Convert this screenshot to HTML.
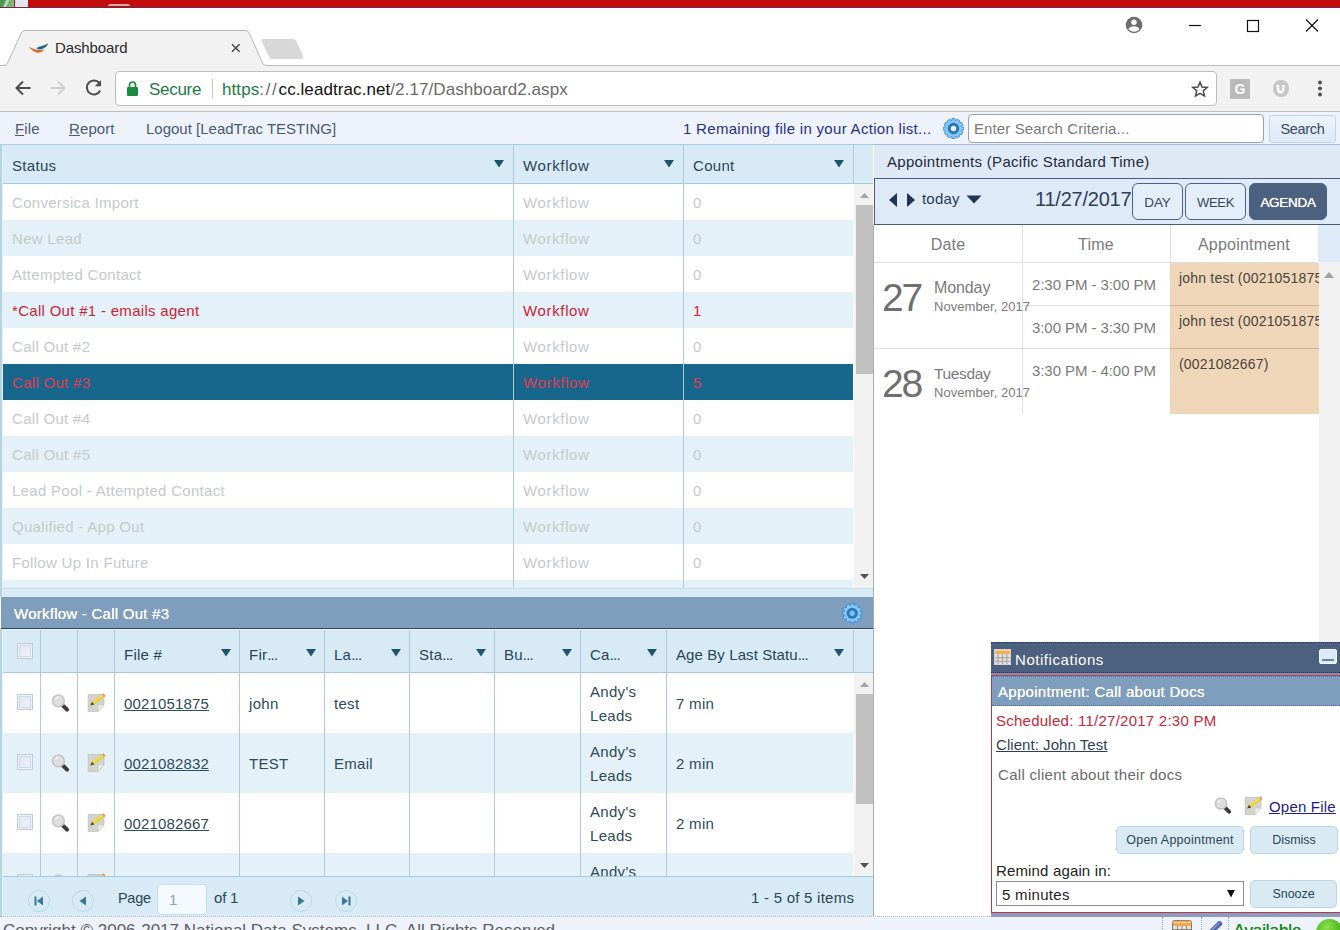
<!DOCTYPE html>
<html>
<head>
<meta charset="utf-8">
<title>Dashboard</title>
<style>
*{box-sizing:border-box;margin:0;padding:0}
html,body{width:1340px;height:930px;overflow:hidden;background:#fff}
body{position:relative;font-family:"Liberation Sans",sans-serif;font-size:15px;color:#2a4a5a;letter-spacing:.3px}
.a{position:absolute}
.t{position:absolute;white-space:nowrap;line-height:20px;height:20px;margin-top:1px}
svg{position:absolute;overflow:visible}
/* ---------- browser chrome ---------- */
#redbar{left:0;top:0;width:1340px;height:7px;background:#c20b0b}
#redline{left:0;top:7px;width:1340px;height:1px;background:#6a2a4a}
#toolbar{left:0;top:65px;width:1340px;height:47px;background:#f2f2f2;border-top:1px solid #bcbcbc;border-bottom:1px solid #bebebe}
#urlbar{left:115px;top:71px;width:1102px;height:35px;background:#fff;border:1px solid #bdbdbd;border-radius:4px}
#menubar{left:0;top:112px;width:1340px;height:33px;background:#eef3fb}

#sg{left:0;top:144px;width:874px;height:453px}
.sgh{background:#d8eaf5}
#sg .r{left:3px;width:850px;background:#fff;color:#c6c9cb}
#sg .r.alt{background:#e4f1f8}
#sg .r.red{color:#cf2236}
#sg .r.sel{background:#17678c;color:#e23a52}
#paneborder{left:873px;top:225px;width:1px;height:691px;background:#a3aeb8}

#wg{left:0;top:597px;width:874px;height:320px}
#wg .r{left:3px;width:850px;background:#fff;color:#2d4b5a;overflow:hidden}
#wg .r.alt{background:#e4f1f8}
.cb{width:16px;height:16px;border:1px solid #bfc9dc;background:linear-gradient(135deg,#dfe6f3,#eef2fa);box-shadow:inset 0 0 0 1px #f1f4fb,inset 0 0 0 2px #cfd8e8;margin-top:1px}

#ap{left:874px;top:144px;width:466px;height:772px;background:#fff}
.btn{border:1px solid #4c6080;border-radius:6px;background:#e4eef9}
.bt{top:48px;text-align:center;font-size:13.500px;color:#34465f;letter-spacing:-.1px}
.ev{margin-top:0;left:9px;font-size:14px;color:#4a443c;letter-spacing:.2px}

#nt{left:991px;top:642px;width:349px;height:276px;z-index:5}
.nb{background:#d9eaf3;border:1px solid #b9d7e5;border-radius:5px}
.nbt{text-align:center;font-size:12.500px;color:#2a4656;letter-spacing:-.05px;margin-top:0}
#ft{left:0;top:916px;width:1340px;height:14px;background:#eef2fa;border-top:1px dotted #b5bcc8;overflow:hidden}
</style>
</head>
<body>
<!-- browser chrome -->
<div class="a" id="redbar"></div>
<div class="a" id="redline"></div>
<div class="a" id="toolbar"></div>
<div class="a" id="urlbar"></div>
<div class="a" id="menubar"></div>

<!-- taskbar leftovers on red strip -->
<div class="a" style="left:0;top:0;width:14px;height:7px;background:linear-gradient(115deg,#4c9a4f 30%,#cfe6cf 45%,#6fb06f 60%,#8cc48c)"></div>
<div class="a" style="left:15px;top:0;width:13px;height:7px;background:#dfe6ee"></div>
<div class="a" style="left:108px;top:4px;width:22px;height:2px;background:#dfa9a4;border-radius:2px 2px 0 0"></div>
<!-- tab strip -->
<svg style="left:0;top:28px" width="320" height="40" viewBox="0 28 320 40">
  <path d="M0 65.5 H4 Q6.5 65.5 7.6 63 L21.3 33 Q22.5 30.5 25 30.5 H245.5 Q248 30.5 249.2 33 L262.5 63 Q263.6 65.5 266.5 65.5 H272 V68 H0 Z" fill="#f2f2f2"/>
  <path d="M0 65.5 H4 Q6.5 65.5 7.6 63 L21.3 33 Q22.5 30.5 25 30.5 H245.5 Q248 30.5 249.2 33 L262.5 63 Q263.6 65.5 266.5 65.5 H272" fill="none" stroke="#b6b6b6" stroke-width="1"/>
  <path d="M263 39 H293 Q295.500 39 296.500 41.500 L303 56 Q304 59 301 59 H272 Q270 59 269 56.500 L262 42 Q260.500 39 263 39 Z" fill="#d8d8d8"/>
  <!-- favicon -->
  <path d="M28.500 46.500 C33 49 38 51 44.500 49.500 C42 52.500 38 53.500 35 52 C32 50.500 30.500 48.500 28.500 46.500 Z" fill="#d9692c"/>
  <path d="M36.500 48.300 C39 45.500 44 46.500 48 43.200 C47.500 46.500 44 48.800 40 49.400 C38.500 49.600 37.300 49.200 36.500 48.300 Z" fill="#1f6a80"/>
  <!-- tab close -->
  <path d="M232 44.200 L239.600 51.800 M239.600 44.200 L232 51.800" stroke="#4a4a4a" stroke-width="1.500" fill="none"/>
</svg>
<div class="t" style="left:55px;top:36.500px;font-size:15px;color:#2b2b2b;letter-spacing:-.1px">Dashboard</div>
<!-- window controls -->
<svg style="left:1120px;top:12px" width="210" height="26" viewBox="1120 12 210 26">
  <circle cx="1134" cy="25" r="8.300" fill="#6e6e6e"/>
  <circle cx="1134" cy="22.300" r="2.700" fill="#fff"/>
  <path d="M1128.500 29.300 C1129.500 27 1131.500 26.300 1134 26.300 C1136.500 26.300 1138.500 27 1139.500 29.300 C1138 31 1136 31.700 1134 31.700 C1132 31.700 1130 31 1128.500 29.300 Z" fill="#fff"/>
  <path d="M1189 25.500 H1201" stroke="#111" stroke-width="1.200"/>
  <rect x="1247.500" y="20.500" width="11" height="11" fill="none" stroke="#111" stroke-width="1.200"/>
  <path d="M1306 19.500 L1318 31.500 M1318 19.500 L1306 31.500" stroke="#111" stroke-width="1.200"/>
</svg>
<!-- nav buttons -->
<svg style="left:10px;top:76px" width="100" height="26" viewBox="10 76 100 26">
  <path d="M30.500 88 H17 M23 81.500 L16.500 88 L23 94.500" stroke="#4d4d4d" stroke-width="2" fill="none"/>
  <path d="M50.500 88 H64 M58 81.500 L64.500 88 L58 94.500" stroke="#cfcfcf" stroke-width="2" fill="none"/>
  <path d="M99.300 83 A7 7 0 1 0 100.200 90.500" stroke="#4d4d4d" stroke-width="2" fill="none"/>
  <path d="M101 80 V86.200 H94.800 Z" fill="#4d4d4d"/>
</svg>
<!-- url content -->
<svg style="left:125px;top:80px" width="16" height="18" viewBox="125 80 16 18">
  <rect x="127" y="87" width="11" height="9" rx="1.200" fill="#1a8a3c"/>
  <path d="M129.500 87.500 V85 A3 3 0 0 1 135.500 85 V87.500" stroke="#1a8a3c" stroke-width="1.700" fill="none"/>
</svg>
<div class="t" style="left:149px;top:78.500px;font-size:17px;color:#1f7a45;letter-spacing:-.3px">Secure</div>
<div class="a" style="left:212px;top:79px;width:1px;height:19px;background:#c8c8c8"></div>
<div class="t" style="left:222px;top:78.500px;font-size:17px;letter-spacing:.08px"><span style="color:#1f7a45">https</span><span style="color:#6a6a6a;letter-spacing:1.700px">://</span><span style="color:#111">cc.leadtrac.net</span><span style="color:#6a6a6a">/2.17/Dashboard2.aspx</span></div>
<svg style="left:1191px;top:80px" width="18" height="18" viewBox="0 0 24 24"><path d="M12 2.800 L14.700 9.300 L21.700 9.900 L16.400 14.500 L18 21.300 L12 17.700 L6 21.300 L7.600 14.500 L2.300 9.900 L9.300 9.300 Z" fill="none" stroke="#4d4d4d" stroke-width="2" stroke-linejoin="miter"/></svg>
<div class="a" style="left:1230px;top:78.500px;width:20px;height:20px;background:#bababa"></div>
<div class="t" style="left:1230px;top:79px;width:20px;text-align:center;font-size:14px;font-weight:bold;color:#fff;letter-spacing:0;margin-top:0">G</div>
<div class="a" style="left:1272.500px;top:80px;width:16.500px;height:16.500px;border-radius:50%;background:#c6c6c6"></div>
<svg style="left:1272px;top:80px" width="17" height="17" viewBox="0 0 17 17"><path d="M4 5 H7.300 V9.300 A1.400 1.400 0 0 0 10.100 9.300 V5 H13 V6.200 H12.300 V9.700 A3.700 3.700 0 0 1 4.900 9.700 V6.200 H4 Z" fill="#fafafa"/></svg>
<svg style="left:1317px;top:79px" width="6" height="20" viewBox="0 0 6 20"><circle cx="3" cy="3.500" r="1.900" fill="#4d4d4d"/><circle cx="3" cy="9.500" r="1.900" fill="#4d4d4d"/><circle cx="3" cy="15.500" r="1.900" fill="#4d4d4d"/></svg>
<!-- app menu bar -->
<div class="t" style="left:15px;top:118px;color:#4a5a72;letter-spacing:.1px"><u>F</u>ile</div>
<div class="t" style="left:69px;top:118px;color:#4a5a72;letter-spacing:.1px"><u>R</u>eport</div>
<div class="t" style="left:146px;top:118px;color:#4a5a72;letter-spacing:0">Logout [LeadTrac TESTING]</div>
<div class="t" style="left:683px;top:118px;color:#2a2f8c;letter-spacing:.3px">1 Remaining file in your Action list...</div>
<svg style="left:942.5px;top:117.5px" width="21" height="21" viewBox="-10.500 -10.500 21 21"><path d="M-1.62 -9.87A10.0 10.0 0 0 1 1.62 -9.87L1.60 -8.14A8.3 8.3 0 0 1 2.69 -7.85L3.53 -9.35A10.0 10.0 0 0 1 6.33 -7.74L5.46 -6.25A8.3 8.3 0 0 1 6.25 -5.46L7.74 -6.33A10.0 10.0 0 0 1 9.35 -3.53L7.85 -2.69A8.3 8.3 0 0 1 8.14 -1.60L9.87 -1.62A10.0 10.0 0 0 1 9.87 1.62L8.14 1.60A8.3 8.3 0 0 1 7.85 2.69L9.35 3.53A10.0 10.0 0 0 1 7.74 6.33L6.25 5.46A8.3 8.3 0 0 1 5.46 6.25L6.33 7.74A10.0 10.0 0 0 1 3.53 9.35L2.69 7.85A8.3 8.3 0 0 1 1.60 8.14L1.62 9.87A10.0 10.0 0 0 1 -1.62 9.87L-1.60 8.14A8.3 8.3 0 0 1 -2.69 7.85L-3.53 9.35A10.0 10.0 0 0 1 -6.33 7.74L-5.46 6.25A8.3 8.3 0 0 1 -6.25 5.46L-7.74 6.33A10.0 10.0 0 0 1 -9.35 3.53L-7.85 2.69A8.3 8.3 0 0 1 -8.14 1.60L-9.87 1.62A10.0 10.0 0 0 1 -9.87 -1.62L-8.14 -1.60A8.3 8.3 0 0 1 -7.85 -2.69L-9.35 -3.53A10.0 10.0 0 0 1 -7.74 -6.33L-6.25 -5.46A8.3 8.3 0 0 1 -5.46 -6.25L-6.33 -7.74A10.0 10.0 0 0 1 -3.53 -9.35L-2.69 -7.85A8.3 8.3 0 0 1 -1.60 -8.14L-1.62 -9.87Z" fill="#86c8f8" stroke="#3f8ad0" stroke-width=".9" stroke-linejoin="round"/><circle r="5.700" fill="#2b76be"/><circle r="2.700" fill="#eef6fd"/></svg>
<div class="a" style="left:968px;top:113.500px;width:296px;height:29.500px;background:#fff;border:1px solid #95a1b0;border-radius:4px"></div>
<div class="t" style="left:974px;top:118px;color:#7a7a7a;letter-spacing:.12px">Enter Search Criteria...</div>
<div class="a" style="left:1269px;top:115px;width:67px;height:28px;background:linear-gradient(#edf3fa,#dce8f5);border:1px solid #c3d3e6;border-radius:3px"></div>
<div class="t" style="left:1269px;top:118px;width:67px;text-align:center;color:#3a4a62;font-size:14.500px;letter-spacing:-.3px">Search</div>

<!-- status grid -->
<div class="a" id="sg">
<div class="a" style="left:0;top:0;width:874px;height:1px;background:#a9cfe0"></div>
<div class="a" style="left:0;top:1px;width:3px;height:452px;background:#e6f2f7;border-left:2px solid #b6d4df"></div>
<div class="a sgh" style="left:3px;top:1px;width:870px;height:38px"></div>
<div class="a" style="left:3px;top:39px;width:870px;height:1px;background:#a3cbdd"></div>
<div class="a r" style="top:40px;height:36px">
<span class="t" style="left:9px;top:8px">Conversica Import</span><span class="t" style="left:520px;top:8px;letter-spacing:.65px">Workflow</span><span class="t" style="left:690px;top:8px;letter-spacing:0">0</span>
</div>
<div class="a r alt" style="top:76px;height:36px">
<span class="t" style="left:9px;top:8px">New Lead</span><span class="t" style="left:520px;top:8px;letter-spacing:.65px">Workflow</span><span class="t" style="left:690px;top:8px;letter-spacing:0">0</span>
</div>
<div class="a r" style="top:112px;height:36px">
<span class="t" style="left:9px;top:8px">Attempted Contact</span><span class="t" style="left:520px;top:8px;letter-spacing:.65px">Workflow</span><span class="t" style="left:690px;top:8px;letter-spacing:0">0</span>
</div>
<div class="a r alt red" style="top:148px;height:36px">
<span class="t" style="left:9px;top:8px">*Call Out #1 - emails agent</span><span class="t" style="left:520px;top:8px;letter-spacing:.65px">Workflow</span><span class="t" style="left:690px;top:8px;letter-spacing:0">1</span>
</div>
<div class="a r" style="top:184px;height:36px">
<span class="t" style="left:9px;top:8px">Call Out #2</span><span class="t" style="left:520px;top:8px;letter-spacing:.65px">Workflow</span><span class="t" style="left:690px;top:8px;letter-spacing:0">0</span>
</div>
<div class="a r alt sel" style="top:220px;height:36px">
<span class="t" style="left:9px;top:8px">Call Out #3</span><span class="t" style="left:520px;top:8px;letter-spacing:.65px">Workflow</span><span class="t" style="left:690px;top:8px;letter-spacing:0">5</span>
</div>
<div class="a r" style="top:256px;height:36px">
<span class="t" style="left:9px;top:8px">Call Out #4</span><span class="t" style="left:520px;top:8px;letter-spacing:.65px">Workflow</span><span class="t" style="left:690px;top:8px;letter-spacing:0">0</span>
</div>
<div class="a r alt" style="top:292px;height:36px">
<span class="t" style="left:9px;top:8px">Call Out #5</span><span class="t" style="left:520px;top:8px;letter-spacing:.65px">Workflow</span><span class="t" style="left:690px;top:8px;letter-spacing:0">0</span>
</div>
<div class="a r" style="top:328px;height:36px">
<span class="t" style="left:9px;top:8px">Lead Pool - Attempted Contact</span><span class="t" style="left:520px;top:8px;letter-spacing:.65px">Workflow</span><span class="t" style="left:690px;top:8px;letter-spacing:0">0</span>
</div>
<div class="a r alt" style="top:364px;height:36px">
<span class="t" style="left:9px;top:8px">Qualified - App Out</span><span class="t" style="left:520px;top:8px;letter-spacing:.65px">Workflow</span><span class="t" style="left:690px;top:8px;letter-spacing:0">0</span>
</div>
<div class="a r" style="top:400px;height:36px">
<span class="t" style="left:9px;top:8px">Follow Up In Future</span><span class="t" style="left:520px;top:8px;letter-spacing:.65px">Workflow</span><span class="t" style="left:690px;top:8px;letter-spacing:0">0</span>
</div>
<div class="a r alt" style="top:436px;height:8px">
</div>
<div class="a" style="left:513px;top:1px;width:1px;height:443px;background:#aecbd8"></div>
<div class="a" style="left:683px;top:1px;width:1px;height:443px;background:#aecbd8"></div>
<div class="a" style="left:853px;top:1px;width:1px;height:38px;background:#aecbd8"></div>
<span class="t" style="left:12px;top:11px;color:#2a4656">Status</span>
<span class="t" style="left:523px;top:11px;color:#2a4656;letter-spacing:.65px">Workflow</span>
<span class="t" style="left:693px;top:11px;color:#2a4656">Count</span>
<svg style="left:494px;top:16px" width="10" height="8" viewBox="0 0 10 8"><path d="M0 0 H10 L5 7.500 Z" fill="#1d546e"/></svg>
<svg style="left:664px;top:16px" width="10" height="8" viewBox="0 0 10 8"><path d="M0 0 H10 L5 7.500 Z" fill="#1d546e"/></svg>
<svg style="left:834px;top:16px" width="10" height="8" viewBox="0 0 10 8"><path d="M0 0 H10 L5 7.500 Z" fill="#1d546e"/></svg>
<div class="a" style="left:854px;top:40px;width:19px;height:404px;background:#f1f1f1"></div>
<div class="a" style="left:856px;top:61px;width:17px;height:169px;background:#c1c1c1"></div>
<svg style="left:860px;top:49px" width="9" height="5" viewBox="0 0 9 5"><path d="M0 5 L4.500 0 L9 5 Z" fill="#a3a3a3"/></svg>
<svg style="left:860px;top:430px" width="9" height="5" viewBox="0 0 9 5"><path d="M0 0 L4.500 5 L9 0 Z" fill="#505050"/></svg>
<div class="a" style="left:3px;top:444px;width:870px;height:9px;background:#d9ebf5;border-top:1px solid #c3dfec"></div>
</div>
<div class="a" id="paneborder"></div>

<!-- workflow grid -->
<div class="a" id="wg">
<div class="a" style="left:1px;top:0;width:872px;height:31px;background:#7f9dbd"></div>
<div class="a" style="left:1px;top:31px;width:872px;height:1px;background:#2c4668"></div><div class="a" style="left:1px;top:32px;width:872px;height:1px;background:#e6f2f9"></div>
<span class="t" style="left:14px;top:6px;color:#fff;letter-spacing:.25px;text-shadow:0 0 .6px #fff">Workflow - Call Out #3</span>
<svg style="left:841.5px;top:5.7px" width="20.5" height="20.5" viewBox="-10.500 -10.500 21 21"><path d="M-1.62 -9.87A10.0 10.0 0 0 1 1.62 -9.87L1.60 -8.14A8.3 8.3 0 0 1 2.69 -7.85L3.53 -9.35A10.0 10.0 0 0 1 6.33 -7.74L5.46 -6.25A8.3 8.3 0 0 1 6.25 -5.46L7.74 -6.33A10.0 10.0 0 0 1 9.35 -3.53L7.85 -2.69A8.3 8.3 0 0 1 8.14 -1.60L9.87 -1.62A10.0 10.0 0 0 1 9.87 1.62L8.14 1.60A8.3 8.3 0 0 1 7.85 2.69L9.35 3.53A10.0 10.0 0 0 1 7.74 6.33L6.25 5.46A8.3 8.3 0 0 1 5.46 6.25L6.33 7.74A10.0 10.0 0 0 1 3.53 9.35L2.69 7.85A8.3 8.3 0 0 1 1.60 8.14L1.62 9.87A10.0 10.0 0 0 1 -1.62 9.87L-1.60 8.14A8.3 8.3 0 0 1 -2.69 7.85L-3.53 9.35A10.0 10.0 0 0 1 -6.33 7.74L-5.46 6.25A8.3 8.3 0 0 1 -6.25 5.46L-7.74 6.33A10.0 10.0 0 0 1 -9.35 3.53L-7.85 2.69A8.3 8.3 0 0 1 -8.14 1.60L-9.87 1.62A10.0 10.0 0 0 1 -9.87 -1.62L-8.14 -1.60A8.3 8.3 0 0 1 -7.85 -2.69L-9.35 -3.53A10.0 10.0 0 0 1 -7.74 -6.33L-6.25 -5.46A8.3 8.3 0 0 1 -5.46 -6.25L-6.33 -7.74A10.0 10.0 0 0 1 -3.53 -9.35L-2.69 -7.85A8.3 8.3 0 0 1 -1.60 -8.14L-1.62 -9.87Z" fill="#86c8f8" stroke="#3f8ad0" stroke-width=".9" stroke-linejoin="round"/><circle r="5.700" fill="#2b76be"/><circle r="2.700" fill="#7cc0f4"/></svg>
<div class="a" style="left:0;top:32px;width:3px;height:287px;background:#e6f2f7;border-left:2px solid #b6d4df"></div>
<div class="a" style="left:3px;top:33px;width:870px;height:42px;background:#d8eaf5"></div>
<div class="a" style="left:3px;top:75px;width:870px;height:1px;background:#a3cbdd"></div>
<div class="a r" style="top:76px;height:60px">
<span class="a cb" style="left:14px;top:20px"></span>
<svg style="left:47px;top:20px" width="21" height="21" viewBox="0 0 20 20"><path d="M12.300 12 L16.300 15.800" stroke="#3c3c3c" stroke-width="3.800" stroke-linecap="round"/><circle cx="8" cy="7.500" r="5.600" fill="#dedede" stroke="#c4c4c4" stroke-width="1.500"/><path d="M5 6.300 A3.500 3.500 0 0 1 8.300 4.200" stroke="#f2f2f2" stroke-width="1.600" fill="none"/></svg>
<svg style="left:84px;top:19px" width="20" height="20" viewBox="0 0 20 20"><path d="M1.200 2.500 H17 V13 L11 19.500 H1.200 Z" fill="#d3d3cf" stroke="#bdbdb8" stroke-width=".7"/><path d="M17 13 H11 V19.500 Z" fill="#efefeb" stroke="#c4c4bf" stroke-width=".5"/><path d="M3.200 13.500 L5 9.800 L15.200 2.200 L17.300 5 L7.300 12.500 Z" fill="#e6cf2e"/><path d="M6 10.500 L16 3.200" stroke="#f4e878" stroke-width="1"/><path d="M3.200 13.500 L5 9.800 L7.300 12.500 Z" fill="#4a4630"/><path d="M15.200 2.200 L17.300 5 L18.600 3.900 L16.600 1.200 Z" fill="#e58a78"/></svg>
<span class="t" style="left:121px;top:19.500px;text-decoration:underline;letter-spacing:.15px">0021051875</span>
<span class="t" style="left:246px;top:19.500px">john</span><span class="t" style="left:331px;top:19.500px">test</span>
<span class="t" style="left:673px;top:19.500px;letter-spacing:.3px">7 min</span>
<span class="t" style="left:587px;top:8px">Andy's</span>
<span class="t" style="left:587px;top:32px">Leads</span>
</div>
<div class="a r alt" style="top:136px;height:60px">
<span class="a cb" style="left:14px;top:20px"></span>
<svg style="left:47px;top:20px" width="21" height="21" viewBox="0 0 20 20"><path d="M12.300 12 L16.300 15.800" stroke="#3c3c3c" stroke-width="3.800" stroke-linecap="round"/><circle cx="8" cy="7.500" r="5.600" fill="#dedede" stroke="#c4c4c4" stroke-width="1.500"/><path d="M5 6.300 A3.500 3.500 0 0 1 8.300 4.200" stroke="#f2f2f2" stroke-width="1.600" fill="none"/></svg>
<svg style="left:84px;top:19px" width="20" height="20" viewBox="0 0 20 20"><path d="M1.200 2.500 H17 V13 L11 19.500 H1.200 Z" fill="#d3d3cf" stroke="#bdbdb8" stroke-width=".7"/><path d="M17 13 H11 V19.500 Z" fill="#efefeb" stroke="#c4c4bf" stroke-width=".5"/><path d="M3.200 13.500 L5 9.800 L15.200 2.200 L17.300 5 L7.300 12.500 Z" fill="#e6cf2e"/><path d="M6 10.500 L16 3.200" stroke="#f4e878" stroke-width="1"/><path d="M3.200 13.500 L5 9.800 L7.300 12.500 Z" fill="#4a4630"/><path d="M15.200 2.200 L17.300 5 L18.600 3.900 L16.600 1.200 Z" fill="#e58a78"/></svg>
<span class="t" style="left:121px;top:19.500px;text-decoration:underline;letter-spacing:.15px">0021082832</span>
<span class="t" style="left:246px;top:19.500px">TEST</span><span class="t" style="left:331px;top:19.500px">Email</span>
<span class="t" style="left:673px;top:19.500px;letter-spacing:.3px">2 min</span>
<span class="t" style="left:587px;top:8px">Andy's</span>
<span class="t" style="left:587px;top:32px">Leads</span>
</div>
<div class="a r" style="top:196px;height:60px">
<span class="a cb" style="left:14px;top:20px"></span>
<svg style="left:47px;top:20px" width="21" height="21" viewBox="0 0 20 20"><path d="M12.300 12 L16.300 15.800" stroke="#3c3c3c" stroke-width="3.800" stroke-linecap="round"/><circle cx="8" cy="7.500" r="5.600" fill="#dedede" stroke="#c4c4c4" stroke-width="1.500"/><path d="M5 6.300 A3.500 3.500 0 0 1 8.300 4.200" stroke="#f2f2f2" stroke-width="1.600" fill="none"/></svg>
<svg style="left:84px;top:19px" width="20" height="20" viewBox="0 0 20 20"><path d="M1.200 2.500 H17 V13 L11 19.500 H1.200 Z" fill="#d3d3cf" stroke="#bdbdb8" stroke-width=".7"/><path d="M17 13 H11 V19.500 Z" fill="#efefeb" stroke="#c4c4bf" stroke-width=".5"/><path d="M3.200 13.500 L5 9.800 L15.200 2.200 L17.300 5 L7.300 12.500 Z" fill="#e6cf2e"/><path d="M6 10.500 L16 3.200" stroke="#f4e878" stroke-width="1"/><path d="M3.200 13.500 L5 9.800 L7.300 12.500 Z" fill="#4a4630"/><path d="M15.200 2.200 L17.300 5 L18.600 3.900 L16.600 1.200 Z" fill="#e58a78"/></svg>
<span class="t" style="left:121px;top:19.500px;text-decoration:underline;letter-spacing:.15px">0021082667</span>
<span class="t" style="left:246px;top:19.500px"></span><span class="t" style="left:331px;top:19.500px"></span>
<span class="t" style="left:673px;top:19.500px;letter-spacing:.3px">2 min</span>
<span class="t" style="left:587px;top:8px">Andy's</span>
<span class="t" style="left:587px;top:32px">Leads</span>
</div>
<div class="a r alt" style="top:256px;height:23px">
<span class="a cb" style="left:14px;top:20px"></span>
<svg style="left:47px;top:20px" width="21" height="21" viewBox="0 0 20 20"><path d="M12.300 12 L16.300 15.800" stroke="#3c3c3c" stroke-width="3.800" stroke-linecap="round"/><circle cx="8" cy="7.500" r="5.600" fill="#dedede" stroke="#c4c4c4" stroke-width="1.500"/><path d="M5 6.300 A3.500 3.500 0 0 1 8.300 4.200" stroke="#f2f2f2" stroke-width="1.600" fill="none"/></svg>
<svg style="left:84px;top:19px" width="20" height="20" viewBox="0 0 20 20"><path d="M1.200 2.500 H17 V13 L11 19.500 H1.200 Z" fill="#d3d3cf" stroke="#bdbdb8" stroke-width=".7"/><path d="M17 13 H11 V19.500 Z" fill="#efefeb" stroke="#c4c4bf" stroke-width=".5"/><path d="M3.200 13.500 L5 9.800 L15.200 2.200 L17.300 5 L7.300 12.500 Z" fill="#e6cf2e"/><path d="M6 10.500 L16 3.200" stroke="#f4e878" stroke-width="1"/><path d="M3.200 13.500 L5 9.800 L7.300 12.500 Z" fill="#4a4630"/><path d="M15.200 2.200 L17.300 5 L18.600 3.900 L16.600 1.200 Z" fill="#e58a78"/></svg>
<span class="t" style="left:587px;top:8px">Andy's</span>
</div>
<div class="a" style="left:40px;top:33px;width:1px;height:286px;background:#aecbd8"></div>
<div class="a" style="left:77px;top:33px;width:1px;height:286px;background:#aecbd8"></div>
<div class="a" style="left:114px;top:33px;width:1px;height:286px;background:#aecbd8"></div>
<div class="a" style="left:239px;top:33px;width:1px;height:286px;background:#aecbd8"></div>
<div class="a" style="left:324px;top:33px;width:1px;height:286px;background:#aecbd8"></div>
<div class="a" style="left:409px;top:33px;width:1px;height:286px;background:#aecbd8"></div>
<div class="a" style="left:494px;top:33px;width:1px;height:286px;background:#aecbd8"></div>
<div class="a" style="left:580px;top:33px;width:1px;height:286px;background:#aecbd8"></div>
<div class="a" style="left:666px;top:33px;width:1px;height:286px;background:#aecbd8"></div>
<div class="a" style="left:853px;top:33px;width:1px;height:42px;background:#aecbd8"></div>
<span class="a cb" style="left:17px;top:45px"></span>
<span class="t" style="left:124px;top:46.500px;color:#2a4656;letter-spacing:.25px">File #</span>
<span class="t" style="left:249px;top:46.500px;color:#2a4656;letter-spacing:.25px">Fir<span style="letter-spacing:-.8px">...</span></span>
<span class="t" style="left:334px;top:46.500px;color:#2a4656;letter-spacing:.25px">La<span style="letter-spacing:-.8px">...</span></span>
<span class="t" style="left:419px;top:46.500px;color:#2a4656;letter-spacing:.25px">Sta<span style="letter-spacing:-.8px">...</span></span>
<span class="t" style="left:504px;top:46.500px;color:#2a4656;letter-spacing:.25px">Bu<span style="letter-spacing:-.8px">...</span></span>
<span class="t" style="left:590px;top:46.500px;color:#2a4656;letter-spacing:.25px">Ca<span style="letter-spacing:-.8px">...</span></span>
<span class="t" style="left:676px;top:46.500px;color:#2a4656;letter-spacing:.1px">Age By Last Statu<span style="letter-spacing:-.8px">...</span></span>
<svg style="left:221px;top:52px" width="10" height="8" viewBox="0 0 10 8"><path d="M0 0 H10 L5 7.500 Z" fill="#1d546e"/></svg>
<svg style="left:306px;top:52px" width="10" height="8" viewBox="0 0 10 8"><path d="M0 0 H10 L5 7.500 Z" fill="#1d546e"/></svg>
<svg style="left:391px;top:52px" width="10" height="8" viewBox="0 0 10 8"><path d="M0 0 H10 L5 7.500 Z" fill="#1d546e"/></svg>
<svg style="left:476px;top:52px" width="10" height="8" viewBox="0 0 10 8"><path d="M0 0 H10 L5 7.500 Z" fill="#1d546e"/></svg>
<svg style="left:562px;top:52px" width="10" height="8" viewBox="0 0 10 8"><path d="M0 0 H10 L5 7.500 Z" fill="#1d546e"/></svg>
<svg style="left:647px;top:52px" width="10" height="8" viewBox="0 0 10 8"><path d="M0 0 H10 L5 7.500 Z" fill="#1d546e"/></svg>
<svg style="left:834px;top:52px" width="10" height="8" viewBox="0 0 10 8"><path d="M0 0 H10 L5 7.500 Z" fill="#1d546e"/></svg>
<div class="a" style="left:854px;top:76px;width:19px;height:203px;background:#f1f1f1"></div>
<div class="a" style="left:856px;top:97px;width:17px;height:110px;background:#c1c1c1"></div>
<svg style="left:860px;top:85px" width="9" height="5" viewBox="0 0 9 5"><path d="M0 5 L4.500 0 L9 5 Z" fill="#a3a3a3"/></svg>
<svg style="left:860px;top:266px" width="9" height="5" viewBox="0 0 9 5"><path d="M0 0 L4.500 5 L9 0 Z" fill="#505050"/></svg>
<div class="a" style="left:3px;top:279px;width:870px;height:40px;background:#d8eaf5;border-top:1px solid #a3cbdd"></div>
<svg style="left:27px;top:292px" width="24" height="24" viewBox="-12 -12 24 24"><circle r="10.500" fill="#d8eaf5" stroke="#b9d9e8" stroke-width="1"/><path d="M-3.500 -4.500 V4.500" stroke="#3a7a90" stroke-width="2"/><path d="M4 -4.500 V4.500 L-2 0 Z" fill="#3a7a90"/></svg>
<svg style="left:71px;top:292px" width="24" height="24" viewBox="-12 -12 24 24"><circle r="10.500" fill="#d8eaf5" stroke="#b9d9e8" stroke-width="1"/><path d="M3 -4.500 V4.500 L-3.500 0 Z" fill="#3a7a90"/></svg>
<svg style="left:289px;top:292px" width="24" height="24" viewBox="-12 -12 24 24"><circle r="10.500" fill="#d8eaf5" stroke="#b9d9e8" stroke-width="1"/><path d="M-3 -4.500 V4.500 L3.500 0 Z" fill="#3a7a90"/></svg>
<svg style="left:334px;top:292px" width="24" height="24" viewBox="-12 -12 24 24"><circle r="10.500" fill="#d8eaf5" stroke="#b9d9e8" stroke-width="1"/><path d="M3.500 -4.500 V4.500" stroke="#3a7a90" stroke-width="2"/><path d="M-4 -4.500 V4.500 L2 0 Z" fill="#3a7a90"/></svg>
<span class="t" style="left:118px;top:290px;color:#2a4656;font-size:14.500px;letter-spacing:-.3px">Page</span>
<div class="a" style="left:157px;top:287px;width:50px;height:31px;background:#f3f9fc;border:1px solid #c3dfec;border-radius:4px"></div>
<span class="t" style="left:169px;top:292px;color:#8aa3b0;font-size:15px">1</span>
<span class="t" style="left:214px;top:290px;color:#2a4656;font-size:15px;letter-spacing:-.2px">of 1</span>
<span class="t" style="left:751px;top:290px;color:#2a4656;letter-spacing:.25px">1 - 5 of 5 items</span>
</div>

<!-- appointments -->
<div class="a" id="ap">
<div class="a" style="left:0;top:0;width:466px;height:34px;background:#dfe9f6;border-top:1px solid #a9bcd3"></div>
<span class="t" style="left:13px;top:7px;color:#1e2a3a;letter-spacing:.3px">Appointments (Pacific Standard Time)</span>
<div class="a" style="left:0;top:34px;width:466px;height:47px;background:#deeaf7;border:1px solid #465a7a;border-right:none"></div>
<svg style="left:15px;top:48px" width="95" height="16" viewBox="0 0 95 16"><path d="M8 1 V15 L0 8 Z M18 1 V15 L26 8 Z M77.500 3.500 H92.500 L85 11.500 Z" fill="#1f3556"/></svg>
<span class="t" style="left:48px;top:44px;color:#2a3b57;letter-spacing:.2px">today</span>
<span class="t" style="left:161px;top:42px;line-height:24px;height:24px;font-size:20px;color:#2f3f58;letter-spacing:-.22px">11/27/2017</span>
<div class="a btn" style="left:258px;top:39px;width:51px;height:37px"></div><span class="t bt" style="left:258px;width:51px">DAY</span>
<div class="a btn" style="left:311px;top:39px;width:61px;height:37px"></div><span class="t bt" style="left:311px;width:61px;font-size:13px;letter-spacing:-.3px">WEEK</span>
<div class="a btn" style="left:375px;top:39px;width:78px;height:37px;background:#4c6080"></div><span class="t bt" style="left:375px;width:78px;color:#fff;letter-spacing:-.3px;text-shadow:0 0 .7px #fff">AGENDA</span>
<div class="a" style="left:0;top:81px;width:444px;height:37px;background:#fff"></div>
<div class="a" style="left:444px;top:81px;width:22px;height:37px;background:#deeaf7"></div>
<span class="t" style="left:0px;width:148px;top:89.500px;text-align:center;color:#7b7b7b;font-size:16px;letter-spacing:.2px">Date</span>
<span class="t" style="left:148px;width:148px;top:89.500px;text-align:center;color:#7b7b7b;font-size:16px;letter-spacing:.2px">Time</span>
<span class="t" style="left:296px;width:148px;top:89.500px;text-align:center;color:#7b7b7b;font-size:16px;letter-spacing:.2px">Appointment</span>
<div class="a" style="left:0;top:118px;width:444px;height:1px;background:#e0e0e0"></div>
<div class="a" style="left:148px;top:81px;width:1px;height:189px;background:#e0e0e0"></div>
<div class="a" style="left:296px;top:81px;width:1px;height:38px;background:#e0e0e0"></div>
<div class="a" style="left:149px;top:161px;width:147px;height:1px;background:#e0e0e0"></div>
<div class="a" style="left:0;top:204px;width:296px;height:1px;background:#e0e0e0"></div>
<div class="a" style="left:296px;top:119px;width:149px;height:151px;background:#efd6b8;overflow:hidden"><div class="a" style="left:0;top:42px;width:149px;height:1px;background:#cdb294"></div><div class="a" style="left:0;top:85px;width:149px;height:1px;background:#cdb294"></div><span class="t ev" style="top:5px">john test (0021051875)</span><span class="t ev" style="top:48px">john test (0021051875)</span><span class="t ev" style="top:91px">(0021082667)</span></div>
<div class="a" style="left:445px;top:118px;width:21px;height:380px;background:#f1f1f1"></div>
<svg style="left:450px;top:128px" width="10" height="6" viewBox="0 0 10 6"><path d="M0 6 L5 0 L10 6 Z" fill="#a3a3a3"/></svg>
<span class="t" style="left:8px;top:131px;line-height:44px;height:44px;font-size:39px;color:#6f6f6f;letter-spacing:-2.2px">27</span>
<span class="t" style="left:60px;top:133px;font-size:16px;color:#7b7b7b;letter-spacing:-.1px">Monday</span>
<span class="t" style="left:60px;top:152px;font-size:13px;color:#7b7b7b;letter-spacing:.05px">November, 2017</span>
<span class="t" style="left:8px;top:217px;line-height:44px;height:44px;font-size:39px;color:#6f6f6f;letter-spacing:-2.2px">28</span>
<span class="t" style="left:60px;top:219px;font-size:15.500px;color:#7b7b7b;letter-spacing:-.35px">Tuesday</span>
<span class="t" style="left:60px;top:238px;font-size:13px;color:#7b7b7b;letter-spacing:.05px">November, 2017</span>
<span class="t" style="left:158px;top:130px;font-size:15px;color:#7b7b7b;letter-spacing:-.07px">2:30 PM - 3:00 PM</span>
<span class="t" style="left:158px;top:173px;font-size:15px;color:#7b7b7b;letter-spacing:-.07px">3:00 PM - 3:30 PM</span>
<span class="t" style="left:158px;top:216px;font-size:15px;color:#7b7b7b;letter-spacing:-.07px">3:30 PM - 4:00 PM</span>
</div>

<!-- notifications -->
<div class="a" id="nt">
<div class="a" style="left:0;top:0;width:349px;height:31px;background:#4c6080;border-top:1px dotted #1f2f55;border-bottom:1px dotted #1f2f55"></div><div class="a" style="left:0;top:31px;width:349px;height:2px;background:#8d88a8"></div>
<svg style="left:3px;top:7px" width="17" height="16" viewBox="0 0 17 16"><rect x="0" y="0" width="17" height="16" fill="#e2e0dc"/><rect x=".5" y=".5" width="16" height="4.500" fill="#f2b257"/><rect x=".5" y=".5" width="16" height="1.300" fill="#f8d49c"/><path d="M0 8.700 H17 M0 12.300 H17 M4.200 5 V16 M8.500 5 V16 M12.800 5 V16" stroke="#a5a29d" stroke-width="1.100"/><rect x=".5" y=".5" width="16" height="15" fill="none" stroke="#cfd3da" stroke-width=".8"/></svg>
<span class="t" style="left:24px;top:6.500px;color:#fff;font-size:15px;letter-spacing:.55px">Notifications</span>
<div class="a" style="left:328px;top:7px;width:18px;height:15px;background:#dcecf6;border:1px solid #f2f8fc;border-radius:2px"></div><div class="a" style="left:331px;top:17px;width:12px;height:2px;background:#6a8894"></div>
<div class="a" style="left:0;top:33px;width:349px;height:238px;background:#fff;border:1px solid #b93843;border-right:none;border-top:1px solid #a54858"></div>
<div class="a" style="left:1px;top:34px;width:348px;height:30px;background:#7f9dbd;border-top:1px dotted #5d7da3;border-bottom:1px dotted #4b6a90"></div>
<span class="t" style="left:7px;top:39px;color:#fff;letter-spacing:.3px;text-shadow:0 0 .6px #fff">Appointment: Call about Docs</span>
<span class="t" style="left:5px;top:68px;color:#c5283a;letter-spacing:.25px">Scheduled: 11/27/2017 2:30 PM</span>
<span class="t" style="left:5px;top:92px;color:#2f3f55;text-decoration:underline;letter-spacing:.05px">Client: John Test</span>
<span class="t" style="left:7px;top:122px;color:#6a6a6a;letter-spacing:.3px">Call client about their docs</span>
<svg style="left:222px;top:154px" width="20" height="20" viewBox="0 0 20 20"><path d="M12.300 12 L16.300 15.800" stroke="#3c3c3c" stroke-width="3.800" stroke-linecap="round"/><circle cx="8" cy="7.500" r="5.600" fill="#dedede" stroke="#c4c4c4" stroke-width="1.500"/><path d="M5 6.300 A3.500 3.500 0 0 1 8.300 4.200" stroke="#f2f2f2" stroke-width="1.600" fill="none"/></svg>
<svg style="left:253px;top:153px" width="20" height="20" viewBox="0 0 20 20"><path d="M1.200 2.500 H17 V13 L11 19.500 H1.200 Z" fill="#d3d3cf" stroke="#bdbdb8" stroke-width=".7"/><path d="M17 13 H11 V19.500 Z" fill="#efefeb" stroke="#c4c4bf" stroke-width=".5"/><path d="M3.200 13.500 L5 9.800 L15.200 2.200 L17.300 5 L7.300 12.500 Z" fill="#e6cf2e"/><path d="M6 10.500 L16 3.200" stroke="#f4e878" stroke-width="1"/><path d="M3.200 13.500 L5 9.800 L7.300 12.500 Z" fill="#4a4630"/><path d="M15.200 2.200 L17.300 5 L18.600 3.900 L16.600 1.200 Z" fill="#e58a78"/></svg>
<span class="t" style="left:278px;top:154px;color:#1d1d8a;text-decoration:underline;letter-spacing:.2px">Open File</span>
<div class="a nb" style="left:125px;top:184px;width:128px;height:28px"></div><span class="t nbt" style="left:125px;top:188px;width:128px;letter-spacing:.25px">Open Appointment</span>
<div class="a nb" style="left:259px;top:184px;width:88px;height:28px"></div><span class="t nbt" style="left:259px;top:188px;width:88px">Dismiss</span>
<span class="t" style="left:5px;top:218px;color:#222;letter-spacing:.15px">Remind again in:</span>
<div class="a" style="left:5px;top:239px;width:248px;height:25px;background:#fff;border:1px solid #8e8e8e"></div>
<span class="t" style="left:11px;top:242px;color:#222;letter-spacing:.3px">5 minutes</span>
<svg style="left:236px;top:248px" width="8" height="8" viewBox="0 0 8 8"><path d="M0 0 H8 L4 7.500 Z" fill="#111"/></svg>
<div class="a nb" style="left:259px;top:238px;width:87px;height:28px"></div><span class="t nbt" style="left:259px;top:242px;width:87px">Snooze</span>
<div class="a" style="left:0;top:271px;width:349px;height:4px;background:#8c9dc0"></div>
</div>

<!-- footer -->
<div class="a" id="ft">
<span class="t" style="left:3px;top:3px;font-size:17px;color:#5f5f5f;letter-spacing:0">Copyright © 2006-2017 National Data Systems, LLC. All Rights Reserved</span>
<div class="a" style="left:1162px;top:0;width:0;height:14px;border-left:1px dotted #9aa2b0"></div>
<div class="a" style="left:1201px;top:0;width:0;height:14px;border-left:1px dotted #9aa2b0"></div>
<div class="a" style="left:1228px;top:0;width:0;height:14px;border-left:1px dotted #9aa2b0"></div>
<svg style="left:1172px;top:3px" width="20" height="12" viewBox="0 0 20 12"><rect x=".5" y=".5" width="19" height="14" rx="2" fill="#e6e2da" stroke="#7f7a72"/><path d="M1 2.500 A2 2 0 0 1 3 .8 H17 A2 2 0 0 1 19 2.500 V6 H1 Z" fill="#f0a64a"/><path d="M1 2.500 H19" stroke="#f7cf96" stroke-width="1.200"/><path d="M1 9.500 H19 M5.500 6 V12 M10 6 V12 M14.500 6 V12" stroke="#8f8a84"/></svg>
<svg style="left:1206px;top:3px" width="17" height="12" viewBox="0 0 17 12"><path d="M1.500 12 L11.500 2 A2.400 2.400 0 0 1 15.500 5.500 L8.500 12 Z" fill="#5666a8"/><path d="M4 12 L13 3" stroke="#8e9cd2" stroke-width="1.300"/></svg>
<span class="t" style="left:1233.500px;top:2.500px;font-size:17px;color:#1b8a1b;letter-spacing:-.1px;text-shadow:0 0 .5px #1b8a1b">Available</span>
<div class="a" style="left:1316px;top:2px;width:27px;height:27px;border-radius:50%;background:radial-gradient(circle at 40% 30%,#8be04a,#4bb81e 55%,#2f9a12)"></div>
</div>

</body>
</html>
